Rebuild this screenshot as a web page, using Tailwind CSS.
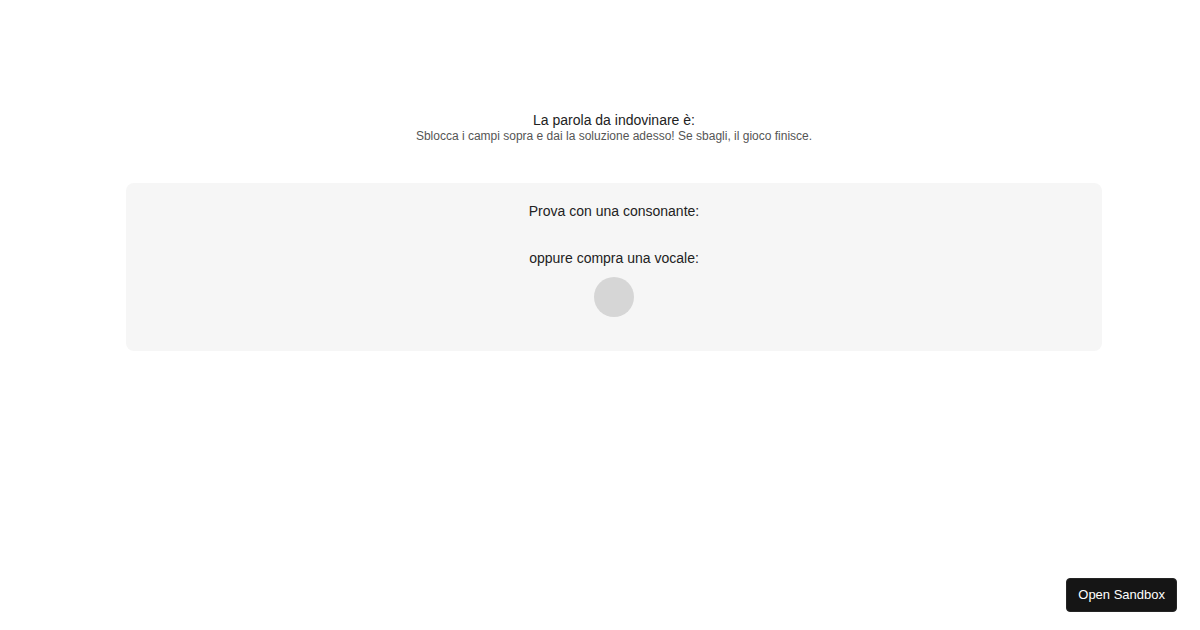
<!DOCTYPE html>
<html lang="it">

<head>
    <title>Indovina la parola</title>
    <meta charset="UTF-8">
    <meta name="viewport" content="width=device-width, initial-scale=1.0">
    <script src="https://cdn.jsdelivr.net/npm/@tailwindcss/browser@4"></script>
</head>

<body class="bg-white text-[#222] font-['Liberation_Sans',Arial,sans-serif]">
    <main class="ml-7 px-[98px] pt-28 text-center">
        <div>
            <h1 class="text-sm leading-4">La parola da indovinare è:</h1>
            <p class="text-xs leading-4 text-[#555]">Sblocca i campi sopra e dai la soluzione adesso! Se sbagli, il gioco finisce.</p>
        </div>

        <div class="mt-[39px] rounded-lg bg-[#f6f6f6] pt-5 pb-[34px]">
            <p class="text-sm leading-4">Prova con una consonante:</p>
            <p class="mt-[31px] text-sm leading-4">oppure compra una vocale:</p>
            <button type="button" aria-label="Compra una vocale" class="mx-auto mt-[11px] block size-10 rounded-full bg-[#d6d6d6]"></button>
        </div>
    </main>

    <a href="#" class="fixed right-[23px] bottom-[18px] rounded border border-[#252525] bg-[#151515] px-[11px] py-2 text-[13px] leading-4 text-white">Open Sandbox</a>
</body>

</html>
